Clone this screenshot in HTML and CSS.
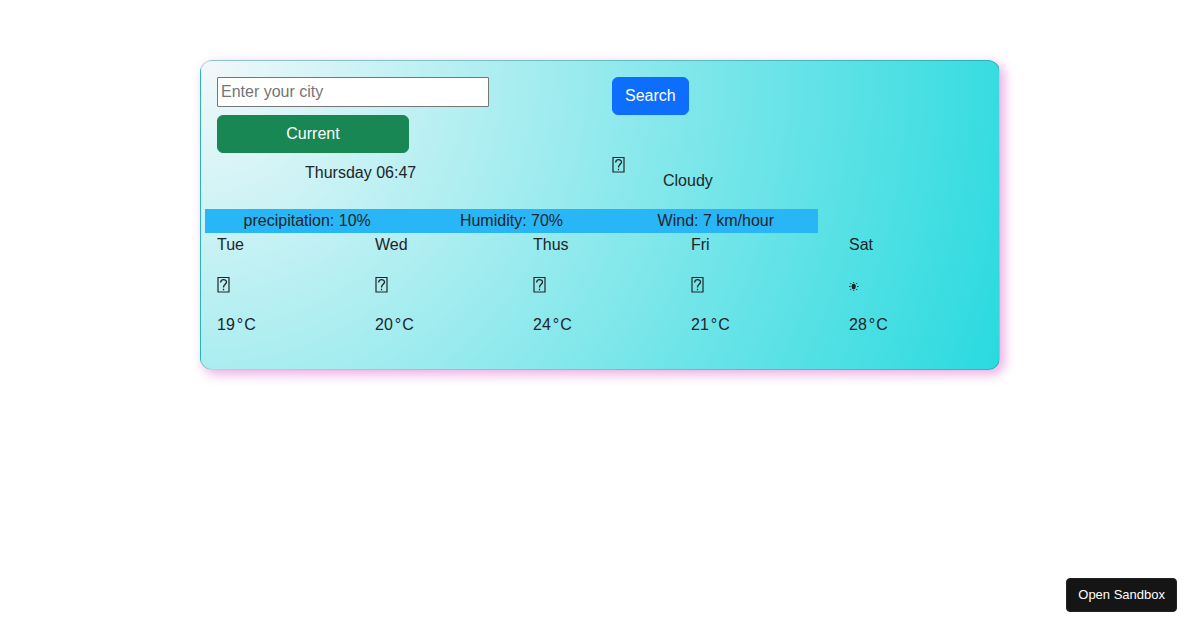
FILE: index.html
```html
<!DOCTYPE html>
<html lang="en">
<head>
    <meta charset="UTF-8">
    <meta name="viewport" content="width=device-width, initial-scale=1.0">
    <title>Weather App</title>
    <link rel="stylesheet" href="styles.css">
</head>
<body>
    <svg class="symbols" aria-hidden="true">
        <symbol id="unknown" viewBox="0 0 13 16">
            <path d="M1 0.500h11v14.500H1z" fill="none" stroke="currentColor" stroke-width="1.200"/>
            <path d="M3.700 5.500C3.700 1.700 9.500 1.700 9.500 5C9.500 7.300 6.500 7.500 6.500 10.500M6.500 11.700V13.200" fill="none" stroke="currentColor" stroke-width="1.300"/>
        </symbol>
        <symbol id="sun" viewBox="0 0 10 16">
            <ellipse cx="4.700" cy="9.500" rx="2.100" ry="2.700" fill="currentColor"/>
            <path d="M0 9.500h1.500M8 9.500h1.500M4.200 5.500h1M4.200 13.500h1M1.300 6.500h1M7.200 6.500h1M1.300 12.500h1M7.200 12.500h1" stroke="currentColor"/>
        </symbol>
    </svg>

    <div class="card">
        <form id="searchForm" class="row">
            <div class="col">
                <input type="search" id="city" class="city-input" placeholder="Enter your city" aria-label="City">
                <button type="button" class="btn btn-success">Current</button>
                <div class="date">Thursday 06:47</div>
            </div>
            <div class="col">
                <button type="submit" class="btn btn-primary">Search</button>
                <div class="condition">
                    <svg class="icon"><use href="#unknown"/></svg>
                    <p class="description">Cloudy</p>
                </div>
            </div>
        </form>
        <div class="details">
            <div>precipitation: 10%</div>
            <div>Humidity: 70%</div>
            <div>Wind: 7 km/hour</div>
        </div>
        <div class="forecast">
            <div class="day">
                <p>Tue</p>
                <p><svg class="icon"><use href="#unknown"/></svg></p>
                <p>19<span class="degree">°</span>C</p>
            </div>
            <div class="day">
                <p>Wed</p>
                <p><svg class="icon"><use href="#unknown"/></svg></p>
                <p>20<span class="degree">°</span>C</p>
            </div>
            <div class="day">
                <p>Thus</p>
                <p><svg class="icon"><use href="#unknown"/></svg></p>
                <p>24<span class="degree">°</span>C</p>
            </div>
            <div class="day">
                <p>Fri</p>
                <p><svg class="icon"><use href="#unknown"/></svg></p>
                <p>21<span class="degree">°</span>C</p>
            </div>
            <div class="day">
                <p>Sat</p>
                <p><svg class="icon icon-sun"><use href="#sun"/></svg></p>
                <p>28<span class="degree">°</span>C</p>
            </div>
        </div>
    </div>

    <button type="button" class="sandbox-button">Open Sandbox</button>

    <script>
        document.getElementById('searchForm').addEventListener('submit', (e) => {
            e.preventDefault();
        });
    </script>
</body>
</html>
```
FILE: styles.css
```css
* {
    box-sizing: border-box;
}
body {
    margin: 0;
    font-family: "Liberation Sans", Arial, sans-serif;
    font-size: 16px;
    line-height: 24px;
    color: #212529;
    background-color: #fff;
}
p {
    margin: 0 0 16px;
}
.symbols {
    position: absolute;
    width: 0;
    height: 0;
}
.card {
    max-width: 800px;
    margin: 60px auto;
    padding: 16px 4px;
    border: 1px solid rgba(0, 0, 0, 0.175);
    border-radius: 12px;
    background-image: radial-gradient(circle at 0 0, #f2f8fa, #29dadf);
    box-shadow: 4px 4px 12px rgba(214, 60, 190, 0.45);
}
.row {
    display: flex;
}
.col {
    flex: 1;
    padding: 0 12px;
}
.city-input {
    display: block;
    width: 272px;
    max-width: 100%;
    height: 30px;
    margin-bottom: 8px;
    padding: 1px 3px;
    border: 1px solid #767676;
    border-radius: 1px;
    font: inherit;
    background-color: #fff;
    appearance: none;
}
.city-input::placeholder {
    color: #757575;
}
.btn {
    display: block;
    padding: 6px 12px;
    border: 1px solid transparent;
    border-radius: 6px;
    font: inherit;
    color: #fff;
    cursor: pointer;
}
.btn-success {
    width: 192px;
    background-color: #198754;
    border-color: #198754;
}
.btn-primary {
    background-color: #0d6efd;
    border-color: #0d6efd;
}
.date {
    margin-top: 8px;
    padding-left: 88px;
}
.condition {
    display: flex;
    margin-top: 40px;
}
.icon {
    display: inline-block;
    width: 13px;
    height: 16px;
    vertical-align: -3px;
}
.condition .icon {
    margin-top: 2px;
}
.icon-sun {
    width: 10px;
}
.description {
    margin-top: 14px;
    margin-left: 38px;
}
.details {
    display: grid;
    grid-template-columns: repeat(3, 1fr);
    width: 613px;
    max-width: 100%;
    text-align: center;
    background-color: #29b6f6;
}
.forecast {
    display: flex;
}
.day {
    flex: 1;
    padding: 0 12px;
}
.degree {
    margin: 0 1px 0 2px;
}
.sandbox-button {
    position: fixed;
    right: 23px;
    bottom: 18px;
    height: 34px;
    padding: 0 11px 1px;
    border: 1px solid #222;
    border-radius: 4px;
    font-family: "Liberation Sans", Arial, sans-serif;
    font-size: 13px;
    color: #fff;
    background-color: #151515;
    cursor: pointer;
}
```
